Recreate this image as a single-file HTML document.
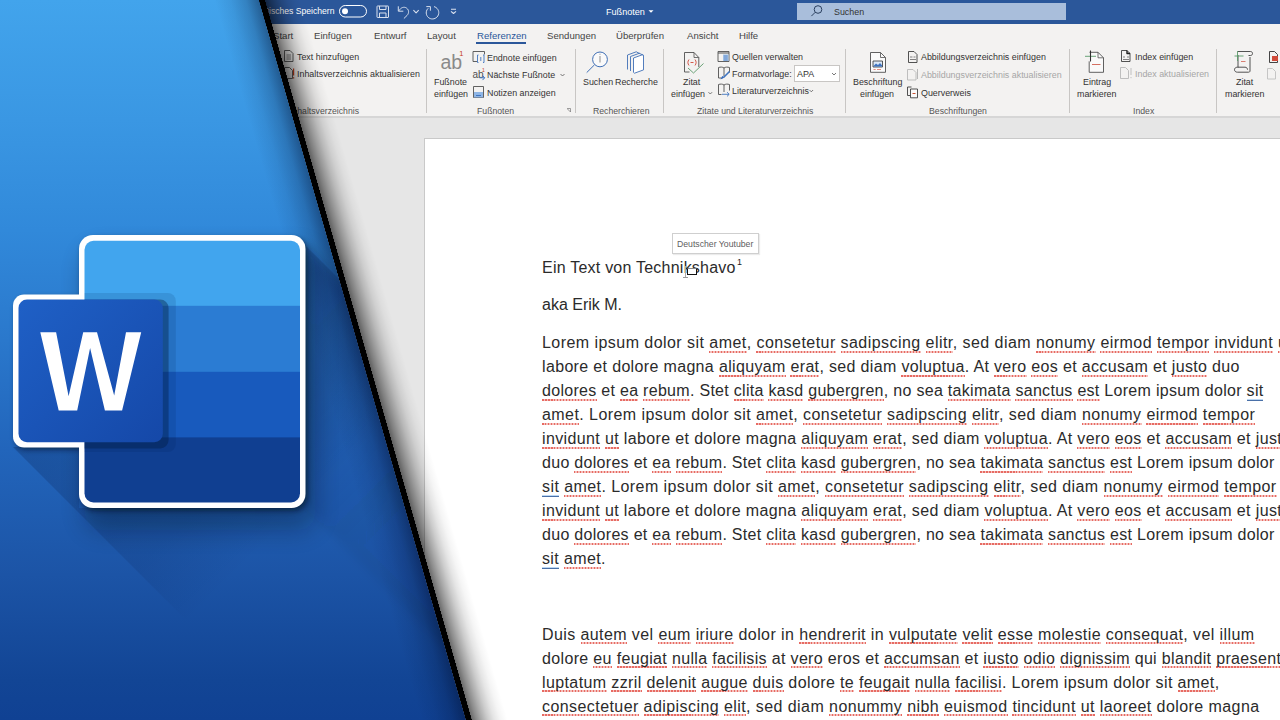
<!DOCTYPE html>
<html><head><meta charset="utf-8">
<style>
*{margin:0;padding:0;box-sizing:border-box}
html,body{width:1280px;height:720px;overflow:hidden;background:#e6e6e6}
body{position:relative;font-family:"Liberation Sans",sans-serif}
.abs{position:absolute}
.t{position:absolute;white-space:nowrap;line-height:0}
#title{left:0;top:0;width:1280px;height:24px;background:#2b579a}
#ribbon{left:0;top:24px;width:1280px;height:92px;background:#f3f2f1}
#rline{left:0;top:116px;width:1280px;height:2px;background:#d6d6d6}
#docbg{left:0;top:118px;width:1280px;height:602px;background:#e6e6e6}
#page{left:424px;top:138px;width:900px;height:700px;background:#fff;border-left:1px solid #c9c9c9;border-top:1px solid #c9c9c9}
.w{color:#fff}
.rt{color:#333;font-size:8.9px}
.tab{color:#444;font-size:9.6px}
.gl{color:#555;font-size:8.7px}
.dis{color:#a6a6a6}
.sep{position:absolute;width:1px;background:#c8c6c4;top:49px;height:64px}
.dl{position:absolute;left:542px;white-space:nowrap;line-height:0;font-size:16px;color:#2b2b2b}
u{text-decoration:none}
u.r{padding-bottom:1.6px;background-image:repeating-linear-gradient(90deg,rgba(225,70,60,.8) 0 1.5px,rgba(225,70,60,.35) 1.5px 3px);background-size:100% 2.2px;background-repeat:no-repeat;background-position:0 100%}
u.b{padding-bottom:1.6px;background-image:linear-gradient(180deg,rgba(170,205,240,.8) 0 1px,#4a70a8 1px 2px);background-size:100% 2px;background-repeat:no-repeat;background-position:0 100%}
#panel{left:0;top:0;width:1280px;height:720px;
 clip-path:polygon(0 0,259px 0,466px 720px,0 720px);
 background:linear-gradient(180deg,#42a4ec 0px,#3a97e3 120px,#3189da 230px,#2a78cc 340px,#2265bb 450px,#1c54a6 575px,#124595 680px,#104193 720px)}
#panelshade{left:0;top:0;width:1280px;height:720px;
 clip-path:polygon(0 0,259px 0,466px 720px,0 720px);
 background:linear-gradient(73.96deg,rgba(0,0,0,0) 405px,rgba(0,10,40,.08) 420px,rgba(0,10,40,.22) 435px,rgba(0,10,40,.45) 448px)}
#edge{left:0;top:0;width:1280px;height:720px;
 background:linear-gradient(73.96deg,rgba(0,0,0,0) 447.5px,#000 448px,#000 453.4px,rgba(0,0,0,.58) 453.6px,rgba(0,0,0,.45) 458px,rgba(0,0,0,.33) 463px,rgba(0,0,0,.2) 469px,rgba(0,0,0,.1) 475px,rgba(0,0,0,.04) 481px,rgba(0,0,0,0) 488px)}
</style></head><body>
<div id="title" class="abs"></div>
<div id="ribbon" class="abs"></div>
<div id="rline" class="abs"></div>
<div id="docbg" class="abs"></div>
<div id="page" class="abs"></div>

<!-- title bar content -->
<div class="t w" style="left:237px;top:11px;font-size:8.6px">Automatisches Speichern</div>
<div class="t w" style="left:606px;top:11.5px;font-size:9.1px">Fußnoten</div>
<div class="abs" style="left:797px;top:3px;width:269px;height:17px;background:#a9bedb"></div>
<div class="t" style="left:834px;top:11.5px;font-size:8.9px;color:#333">Suchen</div>

<!-- tabs -->
<div class="t tab" style="left:273px;top:35.5px">Start</div>
<div class="t tab" style="left:314px;top:35.5px">Einfügen</div>
<div class="t tab" style="left:374px;top:35.5px">Entwurf</div>
<div class="t tab" style="left:427px;top:35.5px">Layout</div>
<div class="t tab" style="left:477px;top:35.5px;color:#2b579a">Referenzen</div>
<div class="abs" style="left:476px;top:42px;width:50px;height:2px;background:#2b579a"></div>
<div class="t tab" style="left:547px;top:35.5px">Sendungen</div>
<div class="t tab" style="left:616px;top:35.5px">Überprüfen</div>
<div class="t tab" style="left:687px;top:35.5px">Ansicht</div>
<div class="t tab" style="left:739px;top:35.5px">Hilfe</div>

<!-- ribbon groups -->
<div class="t rt" style="left:297px;top:57px">Text hinzufügen</div>
<div class="t rt" style="left:297px;top:74px">Inhaltsverzeichnis aktualisieren</div>
<div class="t gl" style="left:290px;top:111px">Inhaltsverzeichnis</div>
<div class="sep" style="left:426px"></div>

<div class="t rt" style="left:434px;top:82px">Fußnote</div>
<div class="t rt" style="left:434px;top:94px">einfügen</div>
<div class="t rt" style="left:487px;top:58px">Endnote einfügen</div>
<div class="t rt" style="left:487px;top:75px">Nächste Fußnote</div>
<div class="t rt" style="left:487px;top:93px">Notizen anzeigen</div>
<div class="t gl" style="left:477px;top:111px">Fußnoten</div>
<div class="sep" style="left:575px"></div>

<div class="t rt" style="left:583px;top:82px">Suchen</div>
<div class="t rt" style="left:615px;top:82px">Recherche</div>
<div class="t gl" style="left:593px;top:111px">Recherchieren</div>
<div class="sep" style="left:663px"></div>

<div class="t rt" style="left:683px;top:82px">Zitat</div>
<div class="t rt" style="left:671px;top:94px">einfügen</div>
<div class="t rt" style="left:732px;top:57px">Quellen verwalten</div>
<div class="t rt" style="left:732px;top:74px">Formatvorlage:</div>
<div class="abs" style="left:794px;top:65px;width:46px;height:17px;background:#fff;border:1px solid #c8c6c4"></div>
<div class="t rt" style="left:797px;top:74px">APA</div>
<div class="t rt" style="left:732px;top:91px">Literaturverzeichnis</div>
<div class="t gl" style="left:697px;top:111px">Zitate und Literaturverzeichnis</div>
<div class="sep" style="left:845px"></div>

<div class="t rt" style="left:853px;top:82px">Beschriftung</div>
<div class="t rt" style="left:860px;top:94px">einfügen</div>
<div class="t rt" style="left:921px;top:57px">Abbildungsverzeichnis einfügen</div>
<div class="t rt dis" style="left:921px;top:75px">Abbildungsverzeichnis aktualisieren</div>
<div class="t rt" style="left:921px;top:93px">Querverweis</div>
<div class="t gl" style="left:929px;top:111px">Beschriftungen</div>
<div class="sep" style="left:1069px"></div>

<div class="t rt" style="left:1083px;top:82px">Eintrag</div>
<div class="t rt" style="left:1077px;top:94px">markieren</div>
<div class="t rt" style="left:1135px;top:57px">Index einfügen</div>
<div class="t rt dis" style="left:1135px;top:74px">Index aktualisieren</div>
<div class="t gl" style="left:1133px;top:111px">Index</div>
<div class="sep" style="left:1216px"></div>
<div class="t rt" style="left:1236px;top:82px">Zitat</div>
<div class="t rt" style="left:1225px;top:94px">markieren</div>


<!-- ribbon icons -->
<svg class="abs" style="left:0;top:0" width="1280" height="120" viewBox="0 0 1280 120" fill="none" stroke-linejoin="round">
 <!-- title bar -->
 <rect x="339.5" y="5.5" width="27" height="11.5" rx="5.75" stroke="#fff" stroke-width="1"/>
 <circle cx="345" cy="11.2" r="3" fill="#fff"/>
 <g stroke="#d8e0ee" stroke-width="1">
  <rect x="377" y="6" width="11.5" height="11.5" rx="0.5"/>
  <path d="M379.5 6v3.5h6.5V6M379.5 17.5v-4.5h6.5v4.5"/>
  <path d="M398.3 6.3v4.9h5"/>
  <path d="M398.9 10.8c1.8-3.2 5.2-4.6 7.8-2.6 2.5 1.9 2.4 5 0.4 7.2l-3.2 3.1"/>
  <path d="M413.4 10.2l2.7 2.6 2.6-2.6" stroke-width="1.1"/>
  <path d="M426.3 6.6h4.1v4.1"/>
  <path d="M434 6.6c3.2 0.9 5.2 3.9 4.7 7.1-0.6 3.4-3.8 5.7-7.2 5.2-3.4-0.5-5.7-3.7-5.2-7.1 0.2-1.4 0.9-2.6 1.9-3.5"/>
  <path d="M451 9.2h5M451 11.3l2.5 2.2 2.5-2.2" stroke-width="1.1"/>
 </g>
 <path d="M648.5 10.2l2.5 2.6 2.5-2.6z" fill="#fff"/>
 <g stroke="#2a3f5e" stroke-width="1">
  <circle cx="818" cy="9.5" r="3.8"/>
  <path d="M815.2 12.3l-3.8 3.8"/>
 </g>
 <!-- Inhaltsverzeichnis group icons -->
 <g stroke="#505050" stroke-width="0.9">
  <path d="M284.5 50.5h5.5l3 3v8h-8.5z"/>
  <path d="M286.5 55h4.5M286.5 57h4.5M286.5 59h4.5" stroke-width="0.7"/>
  <path d="M284.5 67.5h5l3 3v8h-8z"/>
 </g>
 <path d="M293.6 68.5v7M293.6 77.2v1.2" stroke="#c43e1c" stroke-width="1.2"/>
 <!-- Fußnote einfügen -->
 <text x="440.5" y="69.3" font-family="Liberation Sans" font-size="19.5" fill="#8a8a8a" font-weight="normal">ab</text>
 <text x="459.3" y="56" font-family="Liberation Sans" font-size="7.5" fill="#c43e1c">1</text>
 <!-- Endnote -->
 <g stroke-width="0.9">
  <path d="M473 51.5h11.5v3M473 51.5v10h4" stroke="#505050"/>
  <path d="M478.5 55h-1v7.5h1M483 55h1v7.5h-1M480.8 57v4" stroke="#3f74c0"/>
 </g>
 <!-- Nächste Fußnote -->
 <text x="472.5" y="78" font-family="Liberation Sans" font-size="10" fill="#505050">ab</text>
 <text x="482" y="71.5" font-family="Liberation Sans" font-size="5" fill="#c43e1c">1</text>
 <path d="M479.5 77.8h5M482.5 75.5l2.2 2.3-2.2 2.3" stroke="#3f74c0" stroke-width="1"/>
 <path d="M560.5 74l2 2 2-2" stroke="#555" stroke-width="0.8"/>
 <!-- Notizen anzeigen -->
 <rect x="473.5" y="86.5" width="10" height="11" stroke="#505050" stroke-width="0.9"/>
 <rect x="474" y="92" width="9" height="5.5" fill="#8fb6e6"/>
 <path d="M476 95.5h5" stroke="#3f74c0" stroke-width="1"/>
 <path d="M567 108.5h3.5v3.5M570.5 112l-3-3" stroke="#777" stroke-width="0.7"/>
 <!-- Suchen -->
 <g stroke="#3f6fb5" stroke-width="1">
  <circle cx="600" cy="59.4" r="7.4" fill="#fafafa"/>
  <path d="M594.5 64.8l-7.8 7.8"/>
 </g>
 <path d="M600 56v6.5" stroke="#a0a0a0" stroke-width="1.2"/>
 <circle cx="600" cy="54.2" r="0.6" fill="#a0a0a0"/>
 <!-- Recherche books -->
 <g stroke="#3f6fb5" stroke-width="0.9" fill="none">
  <path d="M627.5 69.5v-14.5l9-3.3"/>
  <path d="M630.5 71v-14.5l9-3.3"/>
  <path d="M633.5 58l9-3.3 1 0.7v14.5l-9 3.3-1-0.8z" fill="#fff"/>
  <path d="M636.5 52l7 3.3"/>
 </g>
 <!-- Zitat einfügen -->
 <path d="M684.5 52.5h9.5l4.8 5v9.5M684.5 52.5v19.5h5" stroke="#505050" stroke-width="0.9"/>
 <path d="M694 52.5v5h4.8" stroke="#505050" stroke-width="0.8"/>
 <path d="M689 59.5c-1.5 2-1.5 4 0 6M695 59.5c1.5 2 1.5 4 0 6M690.5 62.5h3" stroke="#d04a3a" stroke-width="0.9"/>
 <path d="M688 68l5.5 5 10-9.5" stroke="#5a9a6a" stroke-width="0.9"/>
 <path d="M708.5 92.2l1.8 1.8 1.8-1.8" stroke="#555" stroke-width="0.8"/>
 <!-- Quellen verwalten -->
 <rect x="718" y="51.5" width="11" height="10" stroke="#505050" stroke-width="0.9"/>
 <path d="M718 53h11" stroke="#505050" stroke-width="1"/>
 <rect x="723" y="54.5" width="5.5" height="6.5" fill="#9fbfe6"/>
 <path d="M724 56h3.5M724 58h3.5M724 60h3.5" stroke="#3f74c0" stroke-width="0.6"/>
 <!-- Formatvorlage -->
 <path d="M718.5 78v-10.5c2-0.6 4-0.6 5.5 0.5 1.5-1.1 3.5-1.1 5.5-0.5v5M718.5 78h3M724 68v8" stroke="#505050" stroke-width="0.9"/>
 <path d="M729.5 71.5l-6 6" stroke="#3f74c0" stroke-width="1.6"/>
 <path d="M720.5 79.5c1-0.5 2.5-1 3.5-2l-1.5-1.5c-1 1-1.5 2.5-2 3.5z" fill="#2f64b8"/>
 <!-- Literaturverzeichnis -->
 <path d="M718.5 94.5v-10c2-0.6 4-0.6 5.5 0.5 1.5-1.1 3.5-1.1 5.5-0.5v6M718.5 94.5h3M724 85v7" stroke="#505050" stroke-width="0.9"/>
 <path d="M722 94.3h7M727 92.2l2.2 2.1-2.2 2.1" stroke="#3f74c0" stroke-width="0.9"/>
 <path d="M809.5 90l1.8 1.8 1.8-1.8" stroke="#555" stroke-width="0.8"/>
 <path d="M832 73l2 2 2-2" stroke="#555" stroke-width="0.8"/>
 <!-- Beschriftung einfügen -->
 <path d="M870.5 52.5h10l5 5v14.8h-15z" stroke="#505050" stroke-width="0.9" fill="#fafafa"/>
 <path d="M880.5 52.5v5h5" stroke="#505050" stroke-width="0.8"/>
 <rect x="873" y="61" width="9.5" height="6" stroke="#303030" stroke-width="0.8" fill="#dbe8f7"/>
 <path d="M873.5 66l2.5-2.5 2 1.5 2-2 2.2 2.5v1h-8.7z" fill="#3f74c0"/>
 <path d="M873.5 69.5h2.2M877 69.5h4" stroke="#e07060" stroke-width="0.8"/>
 <!-- Abbildungsverzeichnis einfügen -->
 <path d="M908.5 51.5h5.5l3 3v8h-8.5z" stroke="#404040" stroke-width="0.9"/>
 <path d="M910 57h2.5M913.5 57h2M910 59.5h6" stroke="#505050" stroke-width="0.7"/>
 <!-- disabled -->
 <path d="M907.5 69.5h5.5l3 3v7.5h-8.5z" stroke="#b8b8b8" stroke-width="0.9"/>
 <path d="M917.5 69v10" stroke="#b8b8b8" stroke-width="1"/>
 <!-- Querverweis -->
 <path d="M907.5 95.5v-8.5h4M907.5 95.5h3" stroke="#404040" stroke-width="0.9"/>
 <rect x="910.5" y="89" width="7" height="8.8" stroke="#404040" stroke-width="0.9" fill="#fafafa"/>
 <path d="M912.5 93.5h3" stroke="#c43e1c" stroke-width="0.9"/>
 <!-- Eintrag markieren -->
 <path d="M1089.5 52.3h8.5l5.5 5.5v14.5h-14.3v-11" stroke="#505050" stroke-width="0.9" fill="#fafafa"/>
 <path d="M1098 52.3v5.5h5.5" stroke="#505050" stroke-width="0.8"/>
 <path d="M1085 56.3h11" stroke="#5a9a6a" stroke-width="0.9"/>
 <path d="M1090.5 50.5v11" stroke="#303030" stroke-width="1.1"/>
 <path d="M1092 64.5h8.5" stroke="#d06050" stroke-width="0.9"/>
 <!-- Index einfügen -->
 <path d="M1121.5 50.5h5.5l3 3v8h-8.5z" stroke="#404040" stroke-width="0.9"/>
 <path d="M1127 50.5v3h3" stroke="#202020" stroke-width="1.4"/>
 <path d="M1123 57h2M1127 57h2M1123 59.5h6" stroke="#505050" stroke-width="0.7"/>
 <!-- Index aktualisieren (disabled) -->
 <path d="M1120.5 67.5h5l3 3v8h-8z" stroke="#b8b8b8" stroke-width="0.9"/>
 <path d="M1131 68v7M1131 77v1.2" stroke="#c0c0c0" stroke-width="1"/>
 <!-- Zitat markieren scroll -->
 <path d="M1238 55v12.5M1250 57v14c0 0.8-0.7 1.2-1.5 1.2h-11c-1.8 0-3-1-3-2.5s1.2-2.5 3-2.5h7.5c1.5 0 2.5 1 2.5 2.5" stroke="#404040" stroke-width="0.9"/>
 <path d="M1238 51.5h12.5c1.2 0 2 0.8 2 2s-0.8 2-2 2h-2" stroke="#404040" stroke-width="0.9"/>
 <path d="M1234.5 56h9M1237.5 51v10" stroke="#5a9a6a" stroke-width="0.9"/>
 <path d="M1241 61.5h4.5" stroke="#d06050" stroke-width="0.8"/>
 <!-- far right -->
 <path d="M1269.5 51.5h5l3 3v8h-8z" stroke="#303030" stroke-width="0.9"/>
 <rect x="1272" y="56" width="6" height="5" fill="#d04a3a"/>
 <path d="M1267.5 68.5h5l3 3v7.5h-8z" stroke="#c0c0c0" stroke-width="0.9"/>
</svg>

<!-- document -->
<div class="abs" style="left:672px;top:233px;width:87px;height:21px;background:#fff;border:1px solid #cfcfcf;box-shadow:1px 1px 1px rgba(0,0,0,.08)"></div>
<div class="t" style="left:677px;top:244px;font-size:8.7px;color:#606060">Deutscher Youtuber</div>
<div class="dl" style="top:268px;letter-spacing:0.23px">Ein Text von Technikshavo</div>
<div class="t" style="left:737px;top:262px;font-size:9px;color:#1f1f1f">1</div>
<div class="dl" style="top:305px">aka Erik M.</div>
<div class="dl" style="top:343.26px;letter-spacing:0.449px">Lorem ipsum dolor sit <u class="r">amet</u>, <u class="r">consetetur</u> <u class="r">sadipscing</u> <u class="r">elitr</u>, sed diam <u class="r">nonumy</u> <u class="r">eirmod</u> <u class="r">tempor</u> <u class="r">invidunt</u> <u class="r">ut</u></div>
<div class="dl" style="top:367.26px;letter-spacing:0.343px">labore et dolore magna <u class="r">aliquyam</u> <u class="r">erat</u>, sed diam <u class="r">voluptua</u>. At <u class="r">vero</u> <u class="r">eos</u> et <u class="r">accusam</u> et <u class="r">justo</u> duo</div>
<div class="dl" style="top:391.26px;letter-spacing:0.294px"><u class="r">dolores</u> et <u class="r">ea</u> <u class="r">rebum</u>. Stet <u class="r">clita</u> <u class="r">kasd</u> <u class="r">gubergren</u>, no sea <u class="r">takimata</u> <u class="r">sanctus</u> <u class="r">est</u> Lorem ipsum dolor <u class="b">sit</u></div>
<div class="dl" style="top:415.26px;letter-spacing:0.434px"><u class="r">amet</u>. Lorem ipsum dolor sit <u class="r">amet</u>, <u class="r">consetetur</u> <u class="r">sadipscing</u> <u class="r">elitr</u>, sed diam <u class="r">nonumy</u> <u class="r">eirmod</u> <u class="r">tempor</u></div>
<div class="dl" style="top:439.26px;letter-spacing:0.368px"><u class="r">invidunt</u> <u class="r">ut</u> labore et dolore magna <u class="r">aliquyam</u> <u class="r">erat</u>, sed diam <u class="r">voluptua</u>. At <u class="r">vero</u> <u class="r">eos</u> et <u class="r">accusam</u> et <u class="r">justo</u></div>
<div class="dl" style="top:463.26px;letter-spacing:0.300px">duo <u class="r">dolores</u> et <u class="r">ea</u> <u class="r">rebum</u>. Stet <u class="r">clita</u> <u class="r">kasd</u> <u class="r">gubergren</u>, no sea <u class="r">takimata</u> <u class="r">sanctus</u> <u class="r">est</u> Lorem ipsum dolor</div>
<div class="dl" style="top:487.26px;letter-spacing:0.425px"><u class="b">sit</u> <u class="r">amet</u>. Lorem ipsum dolor sit <u class="r">amet</u>, <u class="r">consetetur</u> <u class="r">sadipscing</u> <u class="r">elitr</u>, sed diam <u class="r">nonumy</u> <u class="r">eirmod</u> <u class="r">tempor</u></div>
<div class="dl" style="top:511.26px;letter-spacing:0.368px"><u class="r">invidunt</u> <u class="r">ut</u> labore et dolore magna <u class="r">aliquyam</u> <u class="r">erat</u>, sed diam <u class="r">voluptua</u>. At <u class="r">vero</u> <u class="r">eos</u> et <u class="r">accusam</u> et <u class="r">justo</u></div>
<div class="dl" style="top:535.26px;letter-spacing:0.300px">duo <u class="r">dolores</u> et <u class="r">ea</u> <u class="r">rebum</u>. Stet <u class="r">clita</u> <u class="r">kasd</u> <u class="r">gubergren</u>, no sea <u class="r">takimata</u> <u class="r">sanctus</u> <u class="r">est</u> Lorem ipsum dolor</div>
<div class="dl" style="top:559.26px;letter-spacing:0.373px"><u class="b">sit</u> <u class="r">amet</u>.</div>
<div class="dl" style="top:634.66px;letter-spacing:0.409px">Duis <u class="r">autem</u> vel <u class="r">eum</u> <u class="r">iriure</u> dolor in <u class="r">hendrerit</u> in <u class="r">vulputate</u> <u class="r">velit</u> <u class="r">esse</u> <u class="r">molestie</u> <u class="r">consequat</u>, vel <u class="r">illum</u></div>
<div class="dl" style="top:658.66px;letter-spacing:0.345px">dolore <u class="r">eu</u> <u class="r">feugiat</u> <u class="r">nulla</u> <u class="r">facilisis</u> at <u class="r">vero</u> eros et <u class="r">accumsan</u> et <u class="r">iusto</u> <u class="r">odio</u> <u class="r">dignissim</u> qui <u class="r">blandit</u> <u class="r">praesent</u></div>
<div class="dl" style="top:682.66px;letter-spacing:0.390px"><u class="r">luptatum</u> <u class="r">zzril</u> <u class="r">delenit</u> <u class="r">augue</u> <u class="r">duis</u> dolore <u class="r">te</u> <u class="r">feugait</u> <u class="r">nulla</u> <u class="r">facilisi</u>. Lorem ipsum dolor sit <u class="r">amet</u>,</div>
<div class="dl" style="top:706.66px;letter-spacing:0.427px"><u class="r">consectetuer</u> <u class="r">adipiscing</u> <u class="r">elit</u>, sed diam <u class="r">nonummy</u> <u class="r">nibh</u> <u class="r">euismod</u> <u class="r">tincidunt</u> <u class="r">ut</u> <u class="r">laoreet</u> dolore magna</div>

<div class="abs" style="left:686.5px;top:268px;width:10px;height:7px;background:#fff;border:1.2px solid #111;border-top-color:#888"></div>
<div class="abs" style="left:684.5px;top:266px;width:1px;height:11px;background:#aaa"></div>
<div class="abs" style="left:682.5px;top:277px;width:5px;height:1px;background:#999"></div>
<!-- left panel -->
<div id="panel" class="abs"></div>
<div id="panelshade" class="abs"></div>
<div id="edge" class="abs"></div>


<!-- logo -->
<svg class="abs" style="left:0;top:0" width="480" height="720" viewBox="0 0 480 720">
 <defs>
  <linearGradient id="wg" x1="0" y1="0" x2="1" y2="1">
   <stop offset="0" stop-color="#1f60c6"/><stop offset="1" stop-color="#1548a8"/>
  </linearGradient>
  <filter id="blur6" x="-50%" y="-50%" width="200%" height="200%"><feGaussianBlur stdDeviation="8"/></filter>
  <filter id="blur2" x="-50%" y="-50%" width="200%" height="200%"><feGaussianBlur stdDeviation="1"/></filter>
  <clipPath id="pc"><polygon points="0,0 259,0 466,720 0,720"/></clipPath>
 </defs>
 <g clip-path="url(#pc)">
  <!-- long shadow -->
  <linearGradient id="lsg" gradientUnits="userSpaceOnUse" x1="13" y1="447" x2="188" y2="622"><stop offset="0" stop-color="#000a30" stop-opacity="0.2"/><stop offset="0.7" stop-color="#000a30" stop-opacity="0.1"/><stop offset="1" stop-color="#000a30" stop-opacity="0"/></linearGradient>
  <polygon points="13,447 79,447 79,508 305,508 305,245 790,730 296,730" fill="url(#lsg)"/>
  <linearGradient id="lsg2" gradientUnits="userSpaceOnUse" x1="305" y1="245" x2="480" y2="420"><stop offset="0" stop-color="#000a30" stop-opacity="0.25"/><stop offset="1" stop-color="#000a30" stop-opacity="0.05"/></linearGradient>
  <polygon points="305,245 305,508 560,763 800,763 305,245" fill="url(#lsg2)" filter="url(#sb2)"/><filter id="sb2" x="-30%" y="-30%" width="160%" height="160%"><feGaussianBlur stdDeviation="5"/></filter>
  <filter id="sb" x="-30%" y="-30%" width="160%" height="160%"><feGaussianBlur stdDeviation="12"/></filter>
  <rect x="85" y="250" width="230" height="280" rx="16" fill="#000818" opacity="0.3" filter="url(#sb)"/>
  <!-- tight drop shadow -->
  <filter id="tsb" x="-20%" y="-20%" width="140%" height="140%"><feGaussianBlur stdDeviation="2.5"/></filter>
  <g filter="url(#tsb)" fill="#000818" opacity="0.5"><rect x="81" y="238" width="227" height="273" rx="14"/><rect x="15" y="297" width="156" height="153" rx="11"/></g>
 </g>
 <!-- white union -->
 <rect x="79" y="235" width="226.5" height="273" rx="14" fill="#fff"/>
 <rect x="13" y="294.5" width="156" height="153" rx="11" fill="#fff"/>
 <!-- doc bands -->
 <clipPath id="dc"><rect x="84.5" y="240.8" width="215.5" height="261.6" rx="9"/></clipPath>
 <g clip-path="url(#dc)">
  <rect x="80" y="238" width="224" height="68" fill="#41a5ee"/>
  <rect x="80" y="305.8" width="224" height="67" fill="#2b7cd3"/>
  <rect x="80" y="371.8" width="224" height="66.6" fill="#185abd"/>
  <rect x="80" y="437.4" width="224" height="70" fill="#103f91"/>
  <rect x="18.5" y="293" width="157.3" height="159" rx="8" fill="#002050" opacity="0.13"/>
  <rect x="18.5" y="299.4" width="150.1" height="149" rx="8.5" fill="#001a40" opacity="0.38"/>
 </g>
 <!-- W square -->
 <rect x="18.5" y="299.6" width="144.3" height="142.6" rx="8.5" fill="url(#wg)"/>
 <polygon fill="#fff" points="40.3,332.3 56.1,332.3 68.6,396.2 83.2,332.3 97.0,332.3 114.2,395.6 126.0,332.3 141.2,332.3 122.1,410.5 104.9,410.5 90.1,348.1 77.2,410.5 58.7,410.5"/>
</svg>

</body></html>
